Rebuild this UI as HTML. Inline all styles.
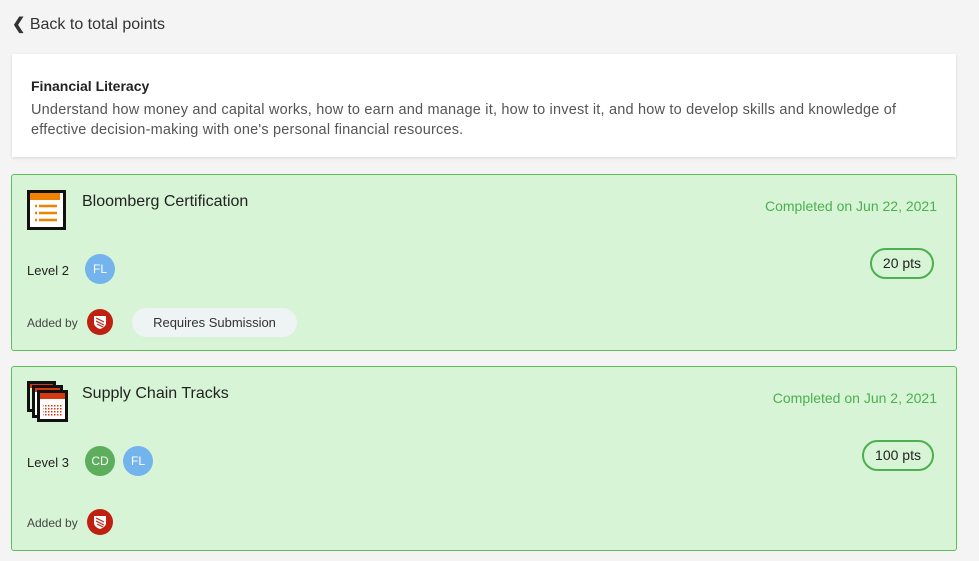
<!DOCTYPE html>
<html><head><style>
body{margin:0;background:#f4f4f4;font-family:"Liberation Sans",sans-serif;color:#222;width:979px;height:561px;overflow:hidden;position:relative}
.abs{position:absolute}
.back{left:12px;top:14px;font-size:16px;color:#333}
.info{left:12px;top:54px;width:944px;height:103px;background:#fff;box-shadow:0 1px 3px rgba(0,0,0,.12)}
.card{left:11px;width:944px;background:#d8f4d6;border:1px solid #5cbf5c;border-radius:3px}
.t{font-size:16px;color:#222}
.comp{font-size:14px;color:#4caf50}
.pts{border:2px solid #4caf50;border-radius:16px;font-size:14px;color:#222;text-align:center;height:27px;line-height:27px}
.av{width:30px;height:30px;border-radius:50%;color:#fff;font-size:12px;text-align:center;line-height:30px}
.sm{font-size:12px;color:#444}
.lv{font-size:13px;color:#222}
</style></head><body>
<div class="abs back"><span style="font-weight:bold">&#10094;</span> Back to total points</div>
<div class="abs info">
<div class="abs" style="left:19px;top:24px;font-size:14px;font-weight:bold">Financial Literacy</div>
<div class="abs" style="left:19px;top:46px;width:900px;font-size:14.5px;letter-spacing:0.2px;line-height:20px;color:#555">Understand how money and capital works, how to earn and manage it, how to invest it, and how to develop skills and knowledge of effective decision-making with one's personal financial resources.</div>
</div>

<div class="abs card" style="top:174px;height:175px">
<svg class="abs" style="left:15px;top:15px" width="40" height="41"><rect x="1.5" y="1.5" width="36" height="37" fill="#fff" stroke="#111" stroke-width="3"/><rect x="3" y="3" width="30" height="7" fill="#ef8200"/><g stroke="#ef8200" stroke-width="2.5"><line x1="8" y1="16" x2="10" y2="16"/><line x1="12" y1="16" x2="30" y2="16"/><line x1="8" y1="23" x2="10" y2="23"/><line x1="12" y1="23" x2="30" y2="23"/><line x1="8" y1="30" x2="10" y2="30"/><line x1="12" y1="30" x2="30" y2="30"/></g></svg>
<div class="abs t" style="left:70px;top:18px">Bloomberg Certification</div>
<div class="abs comp" style="right:19px;top:23px">Completed on Jun 22, 2021</div>
<div class="abs lv" style="left:15px;top:88px">Level 2</div>
<div class="abs av" style="left:73px;top:79px;background:#74b4ec">FL</div>
<div class="abs pts" style="right:22px;top:73px;width:60px">20 pts</div>
<div class="abs sm" style="left:15px;top:141px">Added by</div>
<svg class="abs" style="left:75px;top:134px" width="26" height="26"><circle cx="13" cy="13" r="13" fill="#c0200f"/><path d="M7 7h12v7c0 3-3 5-6 6c-3-1-6-3-6-6z" fill="#fff"/><path d="M9 9l8 4M9 12l8 4M10 15l6 3" stroke="#c0200f" stroke-width="1.2"/></svg>
<div class="abs" style="left:120px;top:133px;width:165px;height:29px;border-radius:15px;background:#eef3f3;font-size:13px;line-height:29px;text-align:center;color:#333">Requires Submission</div>
</div>

<div class="abs card" style="top:366px;height:183px">
<svg class="abs" style="left:15px;top:14px" width="42" height="42"><rect x="1.5" y="1.5" width="26" height="28" fill="none" stroke="#111" stroke-width="3"/><rect x="3" y="3" width="23" height="4" fill="#d43a10"/><rect x="6.5" y="5.5" width="28" height="30" fill="#fff" stroke="#111" stroke-width="3"/><rect x="8" y="7" width="25" height="4" fill="#d43a10"/><rect x="11.5" y="10.5" width="28" height="29" fill="#fff" stroke="#111" stroke-width="3"/><rect x="13" y="12" width="25" height="6" fill="#d43a10"/><rect x="16" y="24" width="20" height="11" fill="url(#d)"/><defs><pattern id="d" width="3" height="3" patternUnits="userSpaceOnUse"><rect width="1.5" height="1.5" fill="#d43a10"/></pattern></defs></svg>
<div class="abs t" style="left:70px;top:18px">Supply Chain Tracks</div>
<div class="abs comp" style="right:19px;top:23px">Completed on Jun 2, 2021</div>
<div class="abs lv" style="left:15px;top:88px">Level 3</div>
<div class="abs av" style="left:73px;top:79px;background:#5cad5c">CD</div>
<div class="abs av" style="left:111px;top:79px;background:#74b4ec">FL</div>
<div class="abs pts" style="right:22px;top:73px;width:68px">100 pts</div>
<div class="abs sm" style="left:15px;top:149px">Added by</div>
<svg class="abs" style="left:75px;top:142px" width="26" height="26"><circle cx="13" cy="13" r="13" fill="#c0200f"/><path d="M7 7h12v7c0 3-3 5-6 6c-3-1-6-3-6-6z" fill="#fff"/><path d="M9 9l8 4M9 12l8 4M10 15l6 3" stroke="#c0200f" stroke-width="1.2"/></svg>
</div>
</body></html>
